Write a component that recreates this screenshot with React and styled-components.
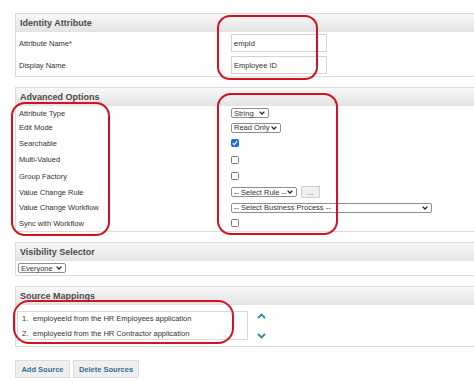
import React from "react";
import styled, { createGlobalStyle } from "styled-components";

const Global = createGlobalStyle`
  html, body { margin: 0; padding: 0; background: #fff; }
  body { font-family: "Liberation Sans", Arial, sans-serif; overflow: hidden; }
  * { box-sizing: border-box; }
`;

const Page = styled.div`
  position: relative;
  width: 474px;
  height: 382px;
  overflow: hidden;
  padding: 13px 0 0 15px;
  display: flex;
  flex-direction: column;
  gap: 10px;
`;

const Panel = styled.section`
  border: 1px solid #dcdcdc;
  margin-right: -6px;
  background: #fff;
`;

const Header = styled.div`
  height: 18px;
  display: flex;
  align-items: center;
  padding-left: 4px;
  font-size: 9px;
  font-weight: bold;
  color: #4a4a4a;
  background: linear-gradient(#f8f8f8, #e3e3e3);
`;

const Grid = styled.div`
  display: grid;
  grid-template-columns: 215px 1fr;
`;

const Label = styled.div`
  height: ${(p) => p.$h}px;
  display: flex;
  align-items: center;
  padding-left: 3px;
  font-size: 7.5px;
  color: #333;
`;

const Cell = styled.div`
  height: ${(p) => p.$h}px;
  display: flex;
  align-items: center;
  gap: 2px;
`;

const Req = styled.span`
  color: #c00;
`;

const TextInput = styled.div`
  width: 96px;
  height: 18px;
  border: 1px solid #d4d4d4;
  display: flex;
  align-items: center;
  padding-left: 2px;
  font-size: 7.5px;
  color: #333;
`;

const Select = styled.div`
  width: ${(p) => p.$w}px;
  height: ${(p) => p.$hh || 10}px;
  border: 1px solid #8e8e8e;
  border-radius: 2px;
  display: flex;
  align-items: center;
  justify-content: space-between;
  padding: 0 3px 0 2px;
  font-size: 7.5px;
  color: #333;
  background: #fff;
  white-space: nowrap;
`;

const Chev = () => (
  <svg width="6" height="4" viewBox="0 0 6 4">
    <path d="M0.6 0.6 L3 3 L5.4 0.6" fill="none" stroke="#222" strokeWidth="1.3" />
  </svg>
);

const Box = styled.span`
  width: 8px;
  height: 8px;
  border-radius: 1.5px;
  border: 1px solid ${(p) => (p.$on ? "#1a6fd8" : "#7a7a7a")};
  background: ${(p) => (p.$on ? "#1a6fd8" : "#fff")};
  display: flex;
  align-items: center;
  justify-content: center;
`;

const Check = ({ on }) => (
  <Box $on={on}>
    {on && (
      <svg width="6" height="6" viewBox="0 0 6 6">
        <path d="M0.8 3.2 L2.3 4.6 L5.2 1.2" fill="none" stroke="#fff" strokeWidth="1.2" />
      </svg>
    )}
  </Box>
);

const DotsButton = styled.div`
  width: 19px;
  height: 12px;
  margin-left: 2px;
  border: 1px solid #d0d0d0;
  background: #efefef;
  font-size: 7px;
  color: #555;
  display: flex;
  align-items: center;
  justify-content: center;
`;

const Body = styled.div`
  padding: ${(p) => p.$pad};
  display: flex;
  align-items: center;
  gap: 9px;
`;

const List = styled.ol`
  margin: 0;
  width: 231px;
  height: 29px;
  border: 1px solid #dadada;
  padding: 0 0 0 4px;
  list-style: none;
  display: flex;
  flex-direction: column;
  justify-content: center;
  gap: 6px;
`;

const Item = styled.li`
  display: flex;
  font-size: 7.5px;
  color: #333;
  line-height: 9px;
`;

const Num = styled.span`
  width: 11px;
`;

const Arrows = styled.div`
  display: flex;
  flex-direction: column;
  gap: 14px;
`;

const Arrow = ({ up }) => (
  <svg width="9" height="6" viewBox="0 0 9 6">
    <path
      d={up ? "M1 5 L4.5 1.5 L8 5" : "M1 1 L4.5 4.5 L8 1"}
      fill="none"
      stroke="#2b8ca5"
      strokeWidth="1.8"
    />
  </svg>
);

const Buttons = styled.div`
  display: flex;
  gap: 3px;
  margin-top: 3px;
`;

const Button = styled.div`
  width: ${(p) => p.$w}px;
  height: 18px;
  border: 1px solid #dcdcdc;
  background: #efefef;
  display: flex;
  align-items: center;
  justify-content: center;
  font-size: 7.5px;
  font-weight: bold;
  color: #2d6e9c;
`;

const Mark = styled.div`
  position: absolute;
  left: ${(p) => p.$x}px;
  top: ${(p) => p.$y}px;
  width: ${(p) => p.$w}px;
  height: ${(p) => p.$h}px;
  border: 2.5px solid #d4111e;
  border-radius: ${(p) => p.$r}px;
  pointer-events: none;
`;

const advanced = [
  { label: "Attribute Type", h: 14, ctl: <Select $w={38}>String <Chev /></Select> },
  { label: "Edit Mode", h: 15, ctl: <Select $w={50}>Read Only <Chev /></Select> },
  { label: "Searchable", h: 16, ctl: <Check on /> },
  { label: "Multi-Valued", h: 17, ctl: <Check /> },
  { label: "Group Factory", h: 16, ctl: <Check /> },
  {
    label: "Value Change Rule",
    h: 16,
    ctl: (
      <>
        <Select $w={66}>-- Select Rule -- <Chev /></Select>
        <DotsButton>...</DotsButton>
      </>
    ),
  },
  {
    label: "Value Change Workflow",
    h: 15,
    ctl: <Select $w={201}>-- Select Business Process -- <Chev /></Select>,
  },
  { label: "Sync with Workflow", h: 16, ctl: <Check /> },
];

export default function App() {
  return (
    <>
      <Global />
      <Page>
        <Panel>
          <Header>Identity Attribute</Header>
          <Grid>
            <Label $h={22}>
              Attribute Name<Req>*</Req>
            </Label>
            <Cell $h={22}>
              <TextInput>empId</TextInput>
            </Cell>
            <Label $h={22}>Display Name</Label>
            <Cell $h={22}>
              <TextInput>Employee ID</TextInput>
            </Cell>
          </Grid>
        </Panel>

        <Panel>
          <Header>Advanced Options</Header>
          <Grid>
            {advanced.map((r) => (
              <React.Fragment key={r.label}>
                <Label $h={r.h}>{r.label}</Label>
                <Cell $h={r.h}>{r.ctl}</Cell>
              </React.Fragment>
            ))}
          </Grid>
        </Panel>

        <Panel>
          <Header>Visibility Selector</Header>
          <Body $pad="2px 0 2px 2px">
            <Select $w={48}>Everyone <Chev /></Select>
          </Body>
        </Panel>

        <Panel>
          <Header>Source Mappings</Header>
          <Body $pad="6px 0 6px 1px">
            <List>
              <Item>
                <Num>1.</Num>employeeId from the HR Employees application
              </Item>
              <Item>
                <Num>2.</Num>employeeId from the HR Contractor application
              </Item>
            </List>
            <Arrows>
              <Arrow up />
              <Arrow />
            </Arrows>
          </Body>
        </Panel>

        <Buttons>
          <Button $w={55}>Add Source</Button>
          <Button $w={66}>Delete Sources</Button>
        </Buttons>

        <Mark $x={217} $y={15} $w={101} $h={65} $r={13} />
        <Mark $x={11} $y={102} $w={99} $h={134} $r={14} />
        <Mark $x={217} $y={93} $w={121} $h={142} $r={14} />
        <Mark $x={13} $y={300} $w={221} $h={44} $r={16} />
      </Page>
    </>
  );
}
